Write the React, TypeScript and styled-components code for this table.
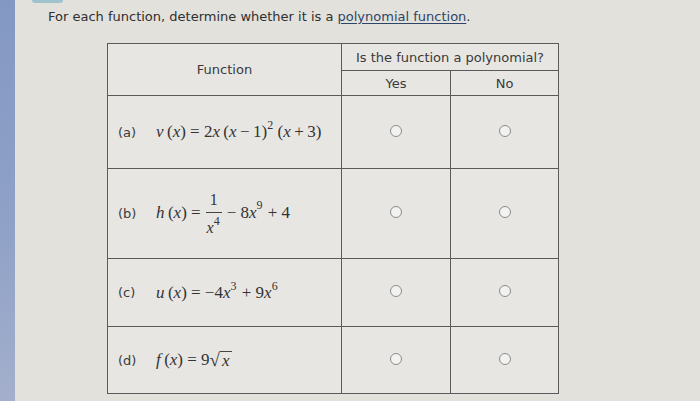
import styled, { createGlobalStyle } from "styled-components";

const GlobalStyle = createGlobalStyle`
  html, body {
    margin: 0;
    padding: 0;
    background: #e3e1db;
  }
  body {
    font-family: "DejaVu Sans", Verdana, sans-serif;
    color: #333;
  }
`;

const Page = styled.div`
  display: flex;
  width: 700px;
  height: 401px;
  overflow: hidden;
  background: #e3e1db;
`;

const SideStrip = styled.div`
  width: 15px;
  flex-shrink: 0;
  background: linear-gradient(180deg, #8398c3 0%, #8fa1c7 55%, #a3afcc 100%);
`;

const Main = styled.div`
  position: relative;
  flex: 1;
  padding: 8px 0 0 33px;
`;

const Tab = styled.div`
  position: absolute;
  top: 0;
  left: 17px;
  width: 31px;
  height: 3px;
  background: #9fc3cc;
  border-radius: 0 0 3px 3px;
`;

const Heading = styled.p`
  margin: 0;
  font-size: 13px;
  line-height: 18px;
  color: #2f2f2f;
`;

const Link = styled.span`
  color: #2e4468;
  text-decoration: underline;
  text-underline-offset: 2px;
`;

const Grid = styled.table`
  margin: 17px 0 0 59px;
  border-collapse: collapse;
  background: #e7e6e3;
  table-layout: fixed;
`;

const Cell = styled.td<{ $w?: number; $h?: number; $center?: boolean }>`
  border: 1.5px solid #5a5a5a;
  width: ${(p) => (p.$w ? `${p.$w}px` : "auto")};
  height: ${(p) => (p.$h ? `${p.$h}px` : "auto")};
  padding: 0;
  text-align: ${(p) => (p.$center ? "center" : "left")};
  vertical-align: middle;
  font-size: 13px;
  color: #3a3a3a;
`;

const FuncRow = styled.div`
  display: flex;
  align-items: center;
  padding-left: 10px;
  gap: 14px;
`;

const Label = styled.span`
  font-size: 13px;
  color: #3a3a3a;
  width: 24px;
`;

const Math = styled.span`
  display: inline-block;
  font-family: "Liberation Serif", "Times New Roman", serif;
  font-size: 17px;
  line-height: 20px;
  color: #333;
  white-space: nowrap;
`;

const V = styled.i`
  font-style: italic;
`;

const Sup = styled.sup`
  font-size: 12px;
  vertical-align: 8px;
  line-height: 0;
  margin-right: 1px;
`;

const Frac = styled.span`
  display: inline-flex;
  flex-direction: column;
  align-items: center;
  vertical-align: middle;
  margin: 0 5px;
  font-size: 16px;
  line-height: 16px;
`;

const Num = styled.span`
  border-bottom: 1px solid #444;
  padding: 0 4px 4px;
`;

const Den = styled.span`
  padding-top: 7px;
`;

const Root = styled.span`
  display: inline-flex;
  align-items: flex-end;
  vertical-align: bottom;
`;

const Radical = styled.span`
  font-size: 19px;
  line-height: 20px;
`;

const Radicand = styled.span`
  border-top: 1px solid #444;
  padding: 0 2px;
  line-height: 18px;
`;

const Radio = styled.span`
  display: inline-block;
  width: 10px;
  height: 10px;
  border: 1.3px solid #8c8c8c;
  border-radius: 50%;
  background: #f2f2f0;
`;

const rows: { label: string; h: number; expr: React.ReactNode }[] = [
  {
    label: "(a)",
    h: 72,
    expr: (
      <>
        <V>v</V>&thinsp;(<V>x</V>) = 2<V>x</V>&thinsp;(<V>x</V>&thinsp;−&thinsp;1)<Sup>2</Sup>&thinsp;(<V>x</V>&thinsp;+&thinsp;3)
      </>
    ),
  },
  {
    label: "(b)",
    h: 89,
    expr: (
      <>
        <V>h</V>&thinsp;(<V>x</V>) =
        <Frac>
          <Num>1</Num>
          <Den>
            <V>x</V>
            <Sup>4</Sup>
          </Den>
        </Frac>
        − 8<V>x</V>
        <Sup>9</Sup> + 4
      </>
    ),
  },
  {
    label: "(c)",
    h: 67,
    expr: (
      <>
        <V>u</V>&thinsp;(<V>x</V>) = −4<V>x</V>
        <Sup>3</Sup> + 9<V>x</V>
        <Sup>6</Sup>
      </>
    ),
  },
  {
    label: "(d)",
    h: 66,
    expr: (
      <>
        <V>f</V>&thinsp;(<V>x</V>) = 9
        <Root>
          <Radical>√</Radical>
          <Radicand>
            <V>x</V>
          </Radicand>
        </Root>
      </>
    ),
  },
];

export default function App() {
  return (
    <>
      <GlobalStyle />
      <Page>
        <SideStrip />
        <Main>
          <Tab />
          <Heading>
            For each function, determine whether it is a <Link>polynomial function</Link>.
          </Heading>
          <Grid>
            <tbody>
              <tr>
                <Cell rowSpan={2} $w={233} $center>
                  Function
                </Cell>
                <Cell colSpan={2} $h={26} $center>
                  Is the function a polynomial?
                </Cell>
              </tr>
              <tr>
                <Cell $w={108} $h={24} $center>
                  Yes
                </Cell>
                <Cell $w={107} $center>
                  No
                </Cell>
              </tr>
              {rows.map((r) => (
                <tr key={r.label}>
                  <Cell $h={r.h}>
                    <FuncRow>
                      <Label>{r.label}</Label>
                      <Math>{r.expr}</Math>
                    </FuncRow>
                  </Cell>
                  <Cell $center>
                    <Radio />
                  </Cell>
                  <Cell $center>
                    <Radio />
                  </Cell>
                </tr>
              ))}
            </tbody>
          </Grid>
        </Main>
      </Page>
    </>
  );
}
